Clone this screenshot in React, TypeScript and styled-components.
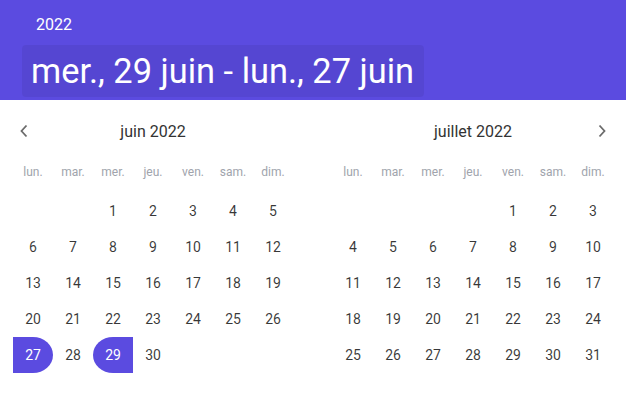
import React from "react";
import styled, { createGlobalStyle } from "styled-components";

const Global = createGlobalStyle`
  html, body { margin: 0; padding: 0; background: #fff; }
  body { font-family: Roboto, "Noto Sans", "Liberation Sans", sans-serif; }
`;

const PURPLE = "#5b4be0";

const Page = styled.div`
  width: 626px;
  height: 404px;
  overflow: hidden;
  background: #fff;
`;

const Header = styled.header`
  background: ${PURPLE};
  height: 100px;
  box-sizing: border-box;
  padding: 13px 0 3px 22px;
  display: flex;
  flex-direction: column;
  color: #fff;
`;

const Year = styled.div`
  font-size: 16px;
  line-height: 24px;
  padding-left: 14px;
`;

const RangeBox = styled.div`
  align-self: flex-start;
  margin-top: 8px;
  height: 52px;
  padding: 0 10px 0 9px;
  border-radius: 4px;
  background: rgba(0, 0, 0, 0.06);
  font-size: 34.4px;
  line-height: 52px;
  white-space: nowrap;
`;

const Months = styled.div`
  display: flex;
  gap: 40px;
  padding: 11px 13px 0;
`;

const Month = styled.section`
  width: 280px;
`;

const MonthHead = styled.div`
  display: grid;
  grid-template-columns: 22px 1fr 22px;
  align-items: center;
  height: 40px;
`;

const Title = styled.div`
  text-align: center;
  font-size: 16px;
  color: #333;
`;

const Arrow = styled.div`
  display: flex;
  align-items: center;
  justify-content: center;
  height: 40px;
`;

const Grid = styled.div`
  display: grid;
  grid-template-columns: repeat(7, 40px);
`;

const WeekDay = styled.div`
  height: 42px;
  display: flex;
  align-items: center;
  justify-content: center;
  font-size: 12px;
  color: #a0a4ac;
`;

const Day = styled.div<{ $sel?: "start" | "end" }>`
  height: 36px;
  display: flex;
  align-items: center;
  justify-content: center;
  font-size: 14px;
  color: ${(p) => (p.$sel ? "#fff" : "rgba(0,0,0,0.78)")};
  background: ${(p) => (p.$sel ? PURPLE : "transparent")};
  border-radius: ${(p) =>
    p.$sel === "start" ? "50% 0 0 50%" : p.$sel === "end" ? "0 50% 50% 0" : "0"};
`;

const Chevron = ({ dir }: { dir: "left" | "right" }) => (
  <svg width="10" height="14" viewBox="0 0 10 14">
    <path
      d={dir === "left" ? "M7.5 1.5 L2.5 7 L7.5 12.5" : "M2.5 1.5 L7.5 7 L2.5 12.5"}
      fill="none"
      stroke="#6b6b6b"
      strokeWidth="1.8"
    />
  </svg>
);

const weekdays = ["lun.", "mar.", "mer.", "jeu.", "ven.", "sam.", "dim."];

type MonthProps = {
  title: string;
  offset: number;
  days: number;
  left?: boolean;
  right?: boolean;
  sel?: Record<number, "start" | "end">;
};

const MonthView = ({ title, offset, days, left, right, sel = {} }: MonthProps) => (
  <Month>
    <MonthHead>
      <Arrow>{left && <Chevron dir="left" />}</Arrow>
      <Title>{title}</Title>
      <Arrow>{right && <Chevron dir="right" />}</Arrow>
    </MonthHead>
    <Grid>
      {weekdays.map((w) => (
        <WeekDay key={w}>{w}</WeekDay>
      ))}
      {Array.from({ length: offset }).map((_, i) => (
        <Day key={"e" + i} />
      ))}
      {Array.from({ length: days }).map((_, i) => (
        <Day key={i} $sel={sel[i + 1]}>
          {i + 1}
        </Day>
      ))}
    </Grid>
  </Month>
);

export default function App() {
  return (
    <Page>
      <Global />
      <Header>
        <Year>2022</Year>
        <RangeBox>mer., 29 juin - lun., 27 juin</RangeBox>
      </Header>
      <Months>
        <MonthView title="juin 2022" offset={2} days={30} left sel={{ 27: "end", 29: "start" }} />
        <MonthView title="juillet 2022" offset={4} days={31} right />
      </Months>
    </Page>
  );
}
